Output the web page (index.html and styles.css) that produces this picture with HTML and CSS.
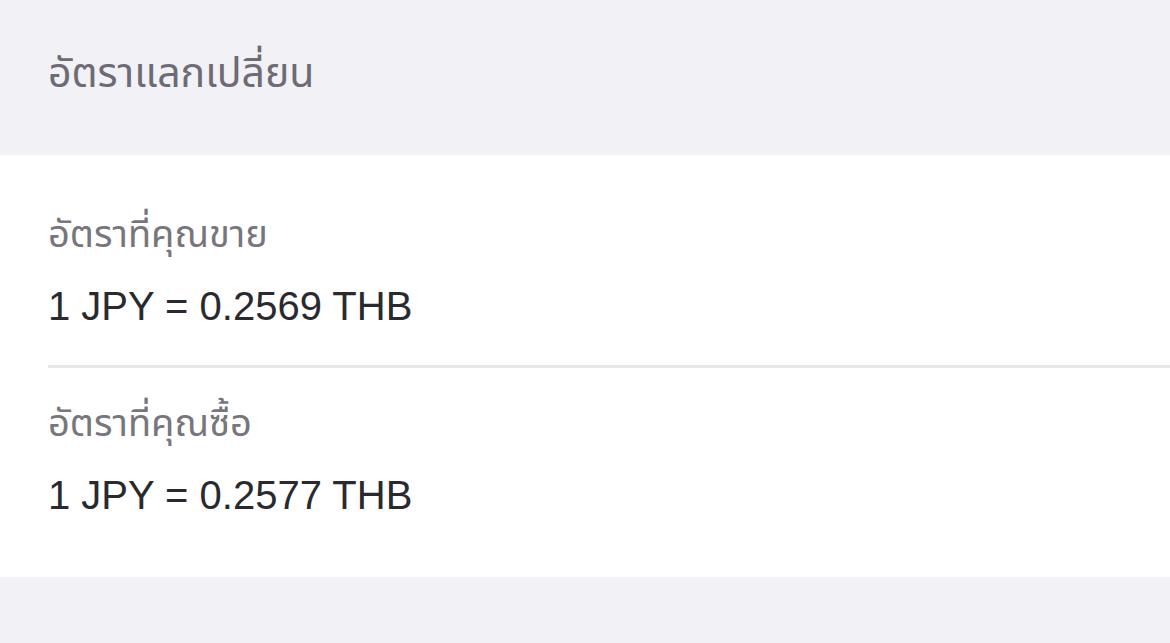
FILE: index.html
```html
<!DOCTYPE html>
<html lang="th">
<head>
  <meta charset="UTF-8">
  <meta name="viewport" content="width=device-width, initial-scale=1.0">
  <title>อัตราแลกเปลี่ยน</title>
  <link rel="stylesheet" href="styles.css">
</head>
<body>

  <div class="section-header">อัตราแลกเปลี่ยน</div>

  <div class="rate-list">
    <div class="rate-row">
      <div class="rate-label">อัตราที่คุณขาย</div>
      <div class="rate-value">1 JPY = 0.2569 THB</div>
    </div>
    <div class="rate-row">
      <div class="rate-label">อัตราที่คุณซื้อ</div>
      <div class="rate-value">1 JPY = 0.2577 THB</div>
    </div>
  </div>

</body>
</html>
```

FILE: styles.css
```css
body {
  margin: 0;
  background-color: #f2f1f5;
  font-family: "Liberation Sans", "Noto Sans Thai", sans-serif;
}
.section-header {
  height: 155px;
  box-sizing: border-box;
  padding: 50px 48px 0;
  font-family: "Noto Sans Thai", "Liberation Sans", sans-serif;
  font-size: 41px;
  line-height: 48px;
  color: #6d6b73;
}
.rate-list {
  background-color: #ffffff;
  padding: 24px 0 23px 48px;
}
.rate-row {
  padding: 33px 0 35px;
}
.rate-row + .rate-row {
  border-top: 3px solid #e6e5e9;
}
.rate-label {
  font-family: "Noto Sans Thai", "Liberation Sans", sans-serif;
  font-size: 38px;
  line-height: 48px;
  color: #77767c;
}
.rate-value {
  margin-top: 22px;
  font-size: 40px;
  line-height: 48px;
  color: #2a2a2e;
}
```
